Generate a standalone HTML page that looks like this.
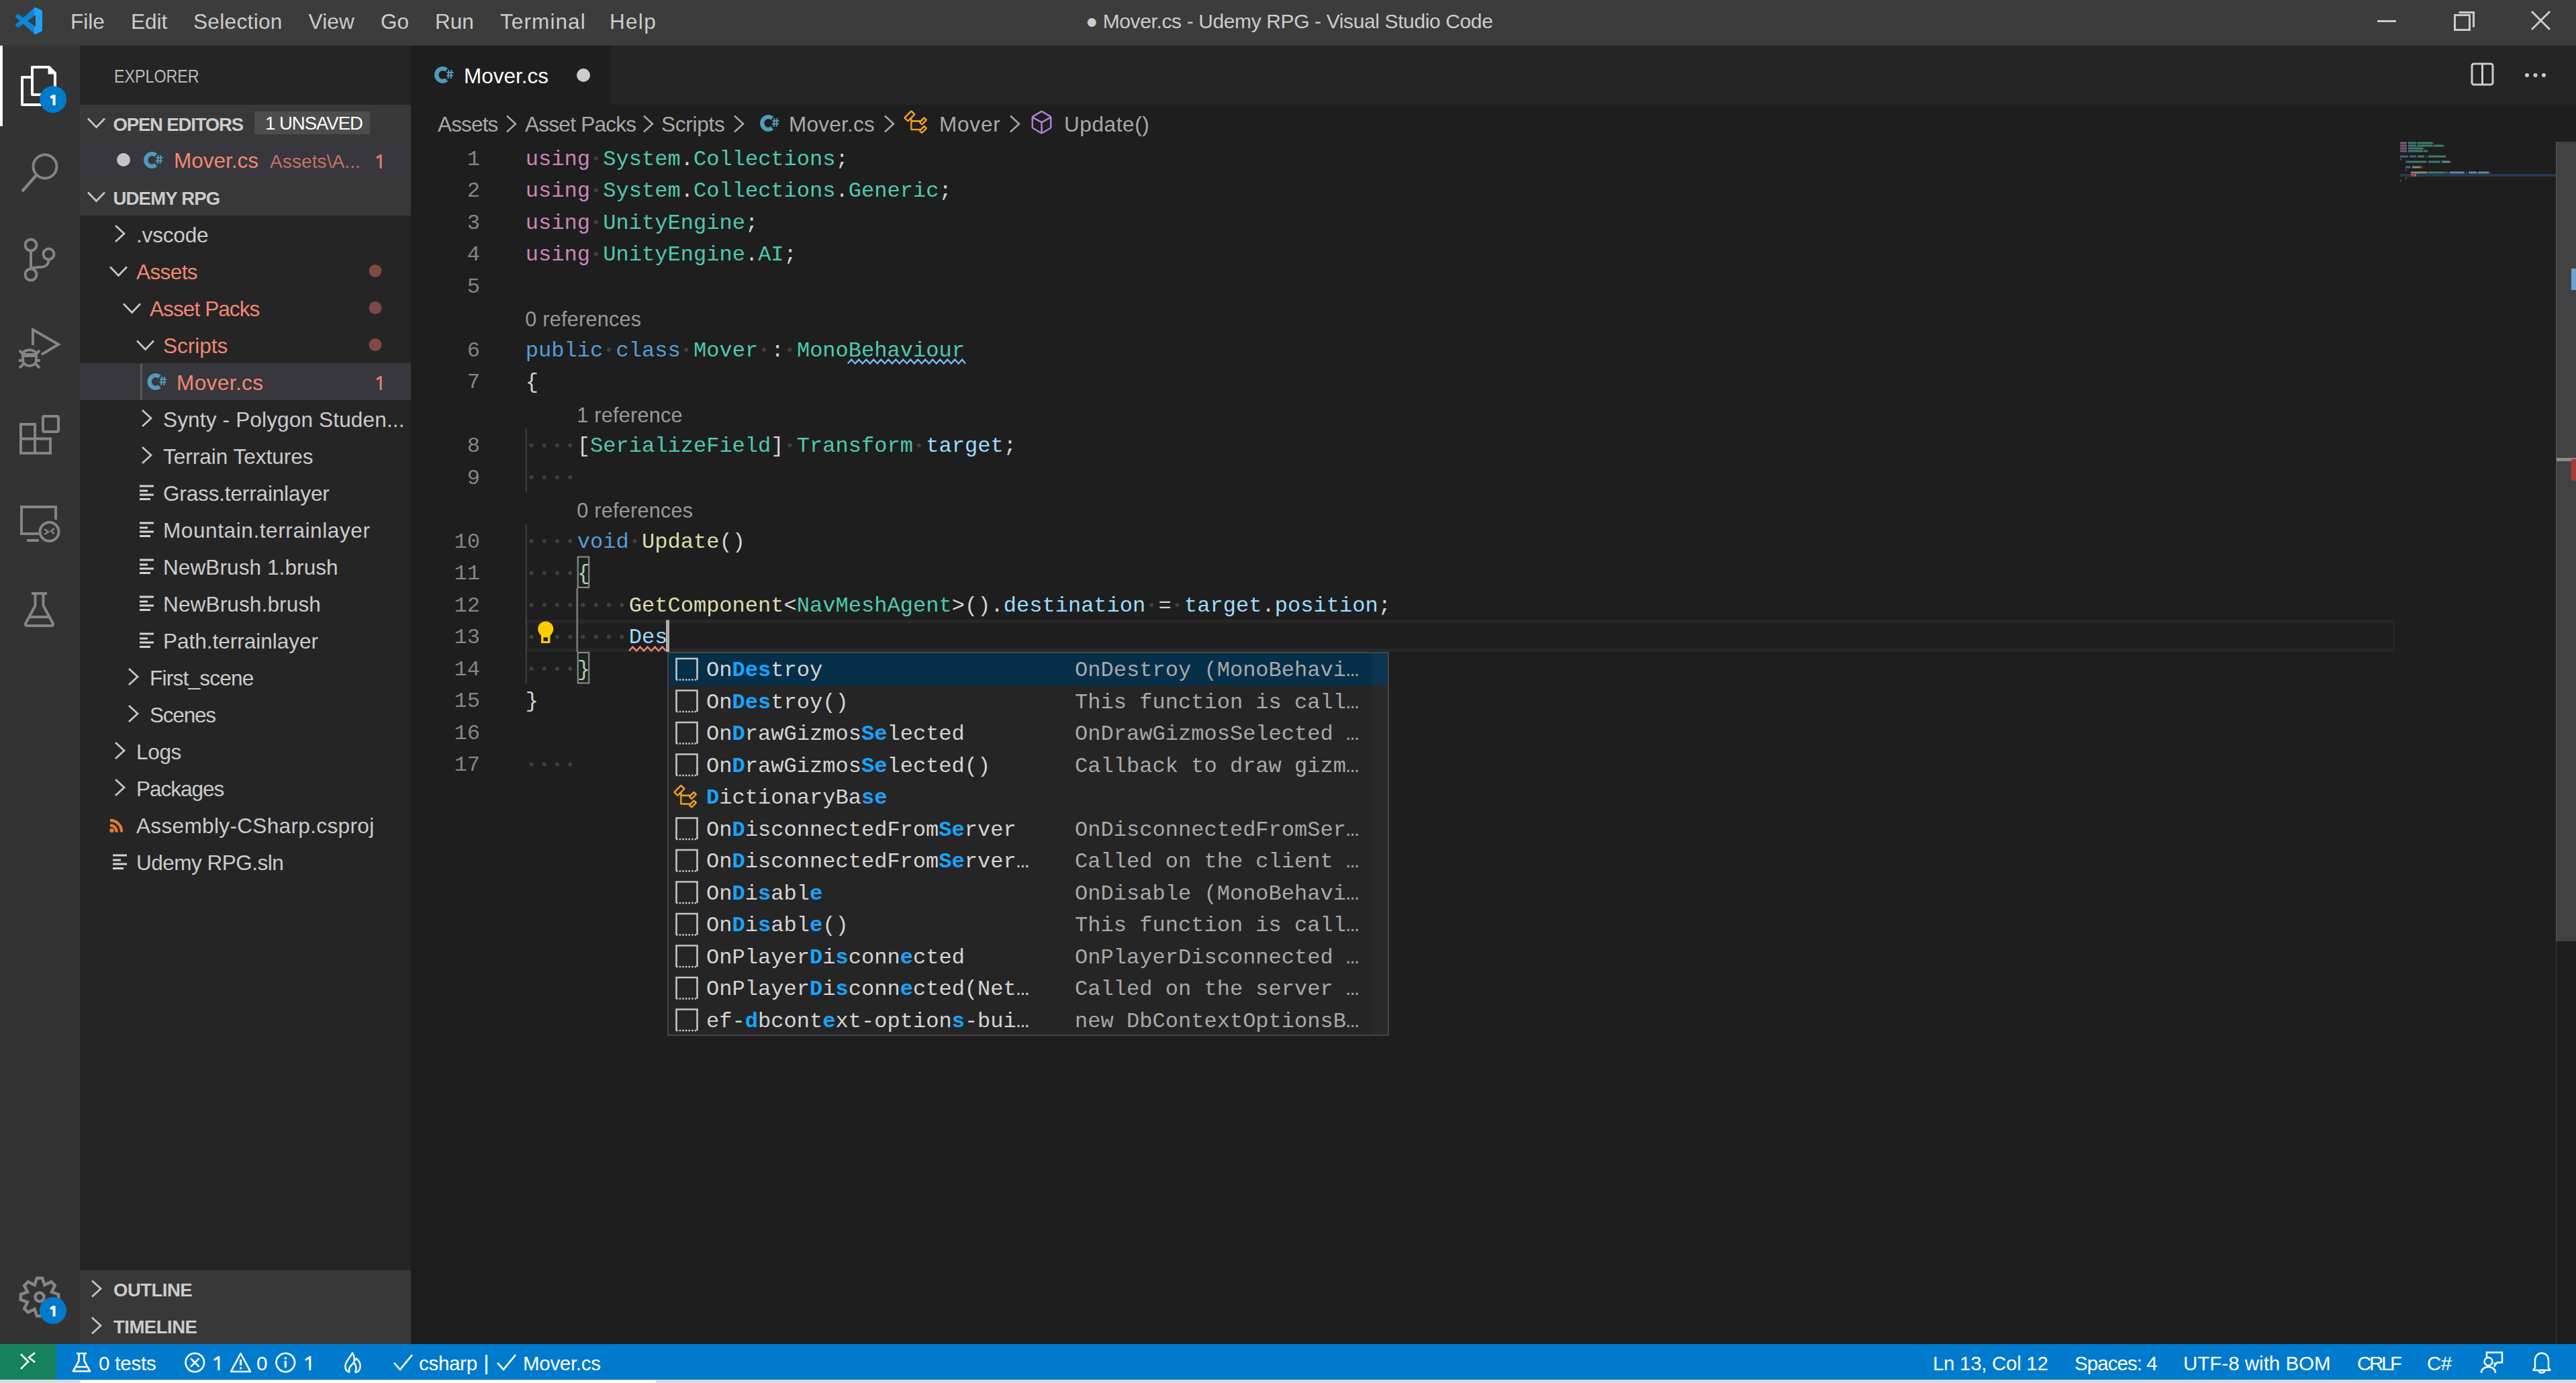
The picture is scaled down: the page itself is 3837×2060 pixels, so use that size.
<!DOCTYPE html><html><head><meta charset="utf-8"><style>html,body{margin:0;padding:0;}body{width:3837px;height:2060px;position:relative;overflow:hidden;background:#1e1e1e;font-family:"Liberation Sans",sans-serif;}</style></head><body>
<div style="position:absolute;left:0px;top:0px;width:3837px;height:68px;background:#3c3c3c;"></div>
<div style="position:absolute;left:0px;top:68px;width:119px;height:1934px;background:#333333;"></div>
<div style="position:absolute;left:119px;top:68px;width:493px;height:1934px;background:#252526;"></div>
<div style="position:absolute;left:612px;top:68px;width:3225px;height:88px;background:#252526;"></div>
<div style="position:absolute;left:612px;top:68px;width:297px;height:88px;background:#1e1e1e;"></div>
<div style="position:absolute;left:0px;top:2002px;width:3837px;height:53px;background:#007acc;"></div>
<div style="position:absolute;left:0px;top:2002px;width:84px;height:53px;background:#16825d;"></div>
<div style="position:absolute;left:0px;top:2055px;width:3837px;height:5px;background:#d8dae3;"></div>
<div style="position:absolute;left:120px;top:2055px;width:857px;height:5px;background:#ffffff;border-top:1px solid #d9cfcf;box-sizing:border-box;"></div>
<svg style="position:absolute;left:23px;top:11px;" width="40" height="40" viewBox="0 0 100 100"><defs><clipPath id="lg"><path d="M96.46 10.8L75.86.87a6.23 6.23 0 0 0-7.1 1.2L29.35 38.04 12.17 25a4.16 4.16 0 0 0-5.32.24L1.35 30.25a4.17 4.17 0 0 0 0 6.16L16.25 50 1.35 63.59a4.17 4.17 0 0 0 0 6.16l5.5 5a4.16 4.16 0 0 0 5.32.24l17.18-13.04L68.76 97.9a6.23 6.23 0 0 0 7.1 1.2l20.6-9.92A6.25 6.25 0 0 0 100 83.56V16.44a6.25 6.25 0 0 0-3.54-5.64zM75 72.7 45.11 50 75 27.3z"/></clipPath></defs><g clip-path="url(#lg)"><rect x="0" y="0" width="100" height="100" fill="#0a78c8"/><path d="M0 30L30 38L75 0H100V100H75L30 62L0 70Z" fill="#0d86da"/><rect x="70" y="0" width="30" height="100" fill="#23a0f2"/></g></svg>
<div style="position:absolute;left:105px;top:17.34px;height:31.5px;line-height:31.5px;font-size:31.5px;font-family:'Liberation Sans', sans-serif;color:#cccccc;font-weight:normal;letter-spacing:0px;white-space:pre;">File</div>
<div style="position:absolute;left:195px;top:17.34px;height:31.5px;line-height:31.5px;font-size:31.5px;font-family:'Liberation Sans', sans-serif;color:#cccccc;font-weight:normal;letter-spacing:0px;white-space:pre;">Edit</div>
<div style="position:absolute;left:288px;top:17.34px;height:31.5px;line-height:31.5px;font-size:31.5px;font-family:'Liberation Sans', sans-serif;color:#cccccc;font-weight:normal;letter-spacing:0.35px;white-space:pre;">Selection</div>
<div style="position:absolute;left:459.5px;top:17.34px;height:31.5px;line-height:31.5px;font-size:31.5px;font-family:'Liberation Sans', sans-serif;color:#cccccc;font-weight:normal;letter-spacing:0.2px;white-space:pre;">View</div>
<div style="position:absolute;left:567px;top:17.34px;height:31.5px;line-height:31.5px;font-size:31.5px;font-family:'Liberation Sans', sans-serif;color:#cccccc;font-weight:normal;letter-spacing:0px;white-space:pre;">Go</div>
<div style="position:absolute;left:648px;top:17.34px;height:31.5px;line-height:31.5px;font-size:31.5px;font-family:'Liberation Sans', sans-serif;color:#cccccc;font-weight:normal;letter-spacing:0px;white-space:pre;">Run</div>
<div style="position:absolute;left:745px;top:17.34px;height:31.5px;line-height:31.5px;font-size:31.5px;font-family:'Liberation Sans', sans-serif;color:#cccccc;font-weight:normal;letter-spacing:1.1px;white-space:pre;">Terminal</div>
<div style="position:absolute;left:908px;top:17.34px;height:31.5px;line-height:31.5px;font-size:31.5px;font-family:'Liberation Sans', sans-serif;color:#cccccc;font-weight:normal;letter-spacing:1.3px;white-space:pre;">Help</div>
<div style="position:absolute;left:1617px;top:16.60px;height:30px;line-height:30px;font-size:30px;font-family:'Liberation Sans', sans-serif;color:#cccccc;font-weight:normal;letter-spacing:-0.38px;white-space:pre;">● Mover.cs - Udemy RPG - Visual Studio Code</div>
<div style="position:absolute;left:3541px;top:30px;width:28px;height:3px;background:#cccccc;"></div>
<svg style="position:absolute;left:3650px;top:12px;" width="40" height="40" viewBox="0 0 40 40"><rect x="6.5" y="10.5" width="22" height="22" fill="none" stroke="#cccccc" stroke-width="3"/><path d="M12.5 6.5H34.5V28.5" fill="none" stroke="#cccccc" stroke-width="3"/></svg>
<svg style="position:absolute;left:3764px;top:10px;" width="40" height="40" viewBox="0 0 40 40"><path d="M7 7L34 34M34 7L7 34" stroke="#cccccc" stroke-width="3"/></svg>
<div style="position:absolute;left:0px;top:68px;width:4px;height:120px;background:#ffffff;"></div>
<svg style="position:absolute;left:0;top:0" width="119" height="2002" viewBox="0 0 119 2002"><path d="M48 100H73L82 109V141H48Z" fill="none" stroke="#fff" stroke-width="4" stroke-linejoin="round"/><path d="M73 100V109H82" fill="#fff" stroke="#fff" stroke-width="3"/><path d="M47 115H33V156H64V142" fill="none" stroke="#fff" stroke-width="4" stroke-linejoin="round"/><circle cx="79" cy="148" r="20" fill="#007acc"/><circle cx="67" cy="248" r="17.5" fill="none" stroke="#858585" stroke-width="4"/><path d="M54.5 260.5L33 285" stroke="#858585" stroke-width="4.5"/><circle cx="46" cy="365" r="8.5" fill="none" stroke="#858585" stroke-width="4"/><circle cx="46" cy="409" r="8.5" fill="none" stroke="#858585" stroke-width="4"/><circle cx="72.5" cy="378.5" r="8" fill="none" stroke="#858585" stroke-width="4"/><path d="M46 373.5V400.5M72.5 386.5C72.5 396 66 398 58 398C51 398 46 399 46 402" fill="none" stroke="#858585" stroke-width="4"/><path d="M49 514V491L87 513L62 528" fill="none" stroke="#858585" stroke-width="4" stroke-linejoin="miter"/><path d="M34 528C34 519 54 519 54 528Z" fill="none" stroke="#858585" stroke-width="4"/><path d="M34 530H54V536C54 548 34 548 34 536Z" fill="none" stroke="#858585" stroke-width="4"/><path d="M29 522L35 528M59 522L53 528M28 537H34M54 537H60M29 548L35 542M59 548L53 542" stroke="#858585" stroke-width="4"/><path d="M31 632H52V675H31ZM31 653.5H75V675H52" fill="none" stroke="#858585" stroke-width="4"/><rect x="64" y="620" width="23" height="23" rx="2" fill="none" stroke="#858585" stroke-width="4"/><path d="M63 795H32V755H83V774" fill="none" stroke="#858585" stroke-width="4"/><path d="M40 805H58" stroke="#858585" stroke-width="4"/><circle cx="73.5" cy="792" r="14" fill="#333" stroke="#858585" stroke-width="4"/><path d="M66 796L72 792L66 788M81 787L76 791L81 795" fill="none" stroke="#858585" stroke-width="2.5"/><path d="M47 884H70M52.5 884V902L38 929Q37 932 40 932H77Q80 932 79 929L64.5 902V884M44 919H73" fill="none" stroke="#858585" stroke-width="4" stroke-linejoin="round"/><polygon points="55.0,1903.8 63.0,1903.8 66.5,1914.0 76.2,1909.2 81.8,1914.8 77.0,1924.5 87.2,1928.0 87.2,1936.0 77.0,1939.5 81.8,1949.2 76.2,1954.8 66.5,1950.0 63.0,1960.2 55.0,1960.2 51.5,1950.0 41.8,1954.8 36.2,1949.2 41.0,1939.5 30.8,1936.0 30.8,1928.0 41.0,1924.5 36.2,1914.8 41.8,1909.2 51.5,1914.0" fill="none" stroke="#858585" stroke-width="4.5" stroke-linejoin="miter"/><circle cx="59" cy="1932" r="6.5" fill="none" stroke="#858585" stroke-width="4.5"/><circle cx="79" cy="1952" r="20" fill="#007acc"/><path d="M80.6 141.2V156.8M75.2 145.6L80.6 142.2" fill="none" stroke="#fff" stroke-width="4"/><path d="M80.6 1945.2V1960.8M75.2 1949.6L80.6 1946.2" fill="none" stroke="#fff" stroke-width="4"/></svg>
<div style="position:absolute;left:170px;top:98.87px;height:28.5px;line-height:28.5px;font-size:28.5px;font-family:'Liberation Sans', sans-serif;color:#bbbbbb;font-weight:normal;letter-spacing:0px;white-space:pre;transform:scaleX(0.815);transform-origin:0 0;">EXPLORER</div>
<div style="position:absolute;left:119px;top:156px;width:493px;height:55px;background:#383838;"></div>
<div style="position:absolute;left:119px;top:211px;width:493px;height:55px;background:#37373d;"></div>
<div style="position:absolute;left:119px;top:266px;width:493px;height:55px;background:#383838;"></div>
<div style="position:absolute;left:119px;top:1892px;width:493px;height:110px;background:#383838;"></div>
<div style="position:absolute;left:168.5px;top:171.72px;height:27.5px;line-height:27.5px;font-size:27.5px;font-family:'Liberation Sans', sans-serif;color:#cccccc;font-weight:bold;letter-spacing:-1.15px;white-space:pre;">OPEN EDITORS</div>
<div style="position:absolute;left:379px;top:166px;width:172px;height:33.5px;background:#4d4d4d;"></div>
<div style="position:absolute;left:395px;top:169.72px;height:27.5px;line-height:27.5px;font-size:27.5px;font-family:'Liberation Sans', sans-serif;color:#ffffff;font-weight:normal;letter-spacing:-1.0px;white-space:pre;">1 UNSAVED</div>
<div style="position:absolute;left:259px;top:224.34px;height:31.5px;line-height:31.5px;font-size:31.5px;font-family:'Liberation Sans', sans-serif;color:#f48771;font-weight:normal;letter-spacing:0px;white-space:pre;">Mover.cs</div>
<div style="position:absolute;left:402px;top:227.30px;height:28px;line-height:28px;font-size:28px;font-family:'Liberation Sans', sans-serif;color:rgba(244,135,113,0.75);font-weight:normal;letter-spacing:0.1px;white-space:pre;">Assets\A...</div>
<div style="position:absolute;left:168.5px;top:281.72px;height:27.5px;line-height:27.5px;font-size:27.5px;font-family:'Liberation Sans', sans-serif;color:#cccccc;font-weight:bold;letter-spacing:-0.8px;white-space:pre;">UDEMY RPG</div>
<div style="position:absolute;left:203px;top:335.34px;height:31.5px;line-height:31.5px;font-size:31.5px;font-family:'Liberation Sans', sans-serif;color:#cccccc;font-weight:normal;letter-spacing:-0.17px;white-space:pre;">.vscode</div>
<div style="position:absolute;left:203px;top:390.34px;height:31.5px;line-height:31.5px;font-size:31.5px;font-family:'Liberation Sans', sans-serif;color:#f48771;font-weight:normal;letter-spacing:-0.6px;white-space:pre;">Assets</div>
<div style="position:absolute;left:223px;top:445.34px;height:31.5px;line-height:31.5px;font-size:31.5px;font-family:'Liberation Sans', sans-serif;color:#f48771;font-weight:normal;letter-spacing:-0.9px;white-space:pre;">Asset Packs</div>
<div style="position:absolute;left:243px;top:500.34px;height:31.5px;line-height:31.5px;font-size:31.5px;font-family:'Liberation Sans', sans-serif;color:#f48771;font-weight:normal;letter-spacing:0px;white-space:pre;">Scripts</div>
<div style="position:absolute;left:119px;top:541px;width:493px;height:55px;background:#37373d;"></div>
<div style="position:absolute;left:209px;top:541px;width:3px;height:55px;background:#585858;"></div>
<div style="position:absolute;left:263px;top:555.34px;height:31.5px;line-height:31.5px;font-size:31.5px;font-family:'Liberation Sans', sans-serif;color:#f48771;font-weight:normal;letter-spacing:0.43px;white-space:pre;">Mover.cs</div>
<div style="position:absolute;left:243px;top:610.34px;height:31.5px;line-height:31.5px;font-size:31.5px;font-family:'Liberation Sans', sans-serif;color:#cccccc;font-weight:normal;letter-spacing:0.17px;white-space:pre;">Synty - Polygon Studen...</div>
<div style="position:absolute;left:243px;top:665.34px;height:31.5px;line-height:31.5px;font-size:31.5px;font-family:'Liberation Sans', sans-serif;color:#cccccc;font-weight:normal;letter-spacing:0px;white-space:pre;">Terrain Textures</div>
<div style="position:absolute;left:243px;top:720.34px;height:31.5px;line-height:31.5px;font-size:31.5px;font-family:'Liberation Sans', sans-serif;color:#cccccc;font-weight:normal;letter-spacing:-0.15px;white-space:pre;">Grass.terrainlayer</div>
<div style="position:absolute;left:243px;top:775.34px;height:31.5px;line-height:31.5px;font-size:31.5px;font-family:'Liberation Sans', sans-serif;color:#cccccc;font-weight:normal;letter-spacing:0.6px;white-space:pre;">Mountain.terrainlayer</div>
<div style="position:absolute;left:243px;top:830.34px;height:31.5px;line-height:31.5px;font-size:31.5px;font-family:'Liberation Sans', sans-serif;color:#cccccc;font-weight:normal;letter-spacing:0.1px;white-space:pre;">NewBrush 1.brush</div>
<div style="position:absolute;left:243px;top:885.34px;height:31.5px;line-height:31.5px;font-size:31.5px;font-family:'Liberation Sans', sans-serif;color:#cccccc;font-weight:normal;letter-spacing:0.15px;white-space:pre;">NewBrush.brush</div>
<div style="position:absolute;left:243px;top:940.34px;height:31.5px;line-height:31.5px;font-size:31.5px;font-family:'Liberation Sans', sans-serif;color:#cccccc;font-weight:normal;letter-spacing:0px;white-space:pre;">Path.terrainlayer</div>
<div style="position:absolute;left:223px;top:995.34px;height:31.5px;line-height:31.5px;font-size:31.5px;font-family:'Liberation Sans', sans-serif;color:#cccccc;font-weight:normal;letter-spacing:-0.75px;white-space:pre;">First_scene</div>
<div style="position:absolute;left:223px;top:1050.34px;height:31.5px;line-height:31.5px;font-size:31.5px;font-family:'Liberation Sans', sans-serif;color:#cccccc;font-weight:normal;letter-spacing:-1.2px;white-space:pre;">Scenes</div>
<div style="position:absolute;left:203px;top:1105.34px;height:31.5px;line-height:31.5px;font-size:31.5px;font-family:'Liberation Sans', sans-serif;color:#cccccc;font-weight:normal;letter-spacing:-0.33px;white-space:pre;">Logs</div>
<div style="position:absolute;left:203px;top:1160.34px;height:31.5px;line-height:31.5px;font-size:31.5px;font-family:'Liberation Sans', sans-serif;color:#cccccc;font-weight:normal;letter-spacing:-1.0px;white-space:pre;">Packages</div>
<div style="position:absolute;left:203px;top:1215.34px;height:31.5px;line-height:31.5px;font-size:31.5px;font-family:'Liberation Sans', sans-serif;color:#cccccc;font-weight:normal;letter-spacing:0.36px;white-space:pre;">Assembly-CSharp.csproj</div>
<div style="position:absolute;left:203px;top:1270.34px;height:31.5px;line-height:31.5px;font-size:31.5px;font-family:'Liberation Sans', sans-serif;color:#cccccc;font-weight:normal;letter-spacing:-0.5px;white-space:pre;">Udemy RPG.sln</div>
<div style="position:absolute;left:169px;top:1907.72px;height:27.5px;line-height:27.5px;font-size:27.5px;font-family:'Liberation Sans', sans-serif;color:#cccccc;font-weight:bold;letter-spacing:-0.5px;white-space:pre;">OUTLINE</div>
<div style="position:absolute;left:169px;top:1962.72px;height:27.5px;line-height:27.5px;font-size:27.5px;font-family:'Liberation Sans', sans-serif;color:#cccccc;font-weight:bold;letter-spacing:-0.5px;white-space:pre;">TIMELINE</div>
<svg style="position:absolute;left:0;top:0" width="612" height="2002" viewBox="0 0 612 2002"><path d="M131 176.5L143.5 189.5L156 176.5" fill="none" stroke="#c5c5c5" stroke-width="2.8"/><circle cx="184" cy="238" r="10" fill="#c5c5c5"/><path d="M232.23 231.17A9.3 9.3 0 1 0 232.23 245.83" fill="none" stroke="#519aba" stroke-width="6.3"/><path d="M235.5 231L234.5 244M239.5 231L238.5 244M232.5 235H242.5M232 239.5H242" stroke="#519aba" stroke-width="2"/><path d="M567.2 230V251M561 235.3L567.2 231.2" fill="none" stroke="rgba(244,135,113,0.85)" stroke-width="3.3"/><path d="M131 286.5L143.5 299.5L156 286.5" fill="none" stroke="#c5c5c5" stroke-width="2.8"/><path d="M172 336L185 348L172 360" fill="none" stroke="#c5c5c5" stroke-width="2.8"/><path d="M164 397.5L176.5 410.5L189 397.5" fill="none" stroke="#c5c5c5" stroke-width="2.8"/><circle cx="559" cy="403.5" r="9.5" fill="#7e4944"/><path d="M184 452.5L196.5 465.5L209 452.5" fill="none" stroke="#c5c5c5" stroke-width="2.8"/><circle cx="559" cy="458.5" r="9.5" fill="#7e4944"/><path d="M204 507.5L216.5 520.5L229 507.5" fill="none" stroke="#c5c5c5" stroke-width="2.8"/><circle cx="559" cy="513.5" r="9.5" fill="#7e4944"/><path d="M237.73 561.17A9.3 9.3 0 1 0 237.73 575.83" fill="none" stroke="#519aba" stroke-width="6.3"/><path d="M241.0 561L240.0 574M245.0 561L244.0 574M238.0 565H248.0M237.5 569.5H247.5" stroke="#519aba" stroke-width="2"/><path d="M567.2 560V581M561 565.3L567.2 561.2" fill="none" stroke="rgba(244,135,113,0.85)" stroke-width="3.3"/><path d="M212 611L225 623L212 635" fill="none" stroke="#c5c5c5" stroke-width="2.8"/><path d="M212 666L225 678L212 690" fill="none" stroke="#c5c5c5" stroke-width="2.8"/><path d="M208 724.0H229M208 731.0H220M208 737.0H229M208 743.5H224" stroke="#d4d4d4" stroke-width="3"/><path d="M208 779.0H229M208 786.0H220M208 792.0H229M208 798.5H224" stroke="#d4d4d4" stroke-width="3"/><path d="M208 834.0H229M208 841.0H220M208 847.0H229M208 853.5H224" stroke="#d4d4d4" stroke-width="3"/><path d="M208 889.0H229M208 896.0H220M208 902.0H229M208 908.5H224" stroke="#d4d4d4" stroke-width="3"/><path d="M208 944.0H229M208 951.0H220M208 957.0H229M208 963.5H224" stroke="#d4d4d4" stroke-width="3"/><path d="M192 996L205 1008L192 1020" fill="none" stroke="#c5c5c5" stroke-width="2.8"/><path d="M192 1051L205 1063L192 1075" fill="none" stroke="#c5c5c5" stroke-width="2.8"/><path d="M172 1106L185 1118L172 1130" fill="none" stroke="#c5c5c5" stroke-width="2.8"/><path d="M172 1161L185 1173L172 1185" fill="none" stroke="#c5c5c5" stroke-width="2.8"/><circle cx="166.5" cy="1237" r="3.2" fill="#e37933"/><path d="M164 1229.5A9 9 0 0 1 173.5 1239.5M164 1222A16.5 16.5 0 0 1 181 1239.5" fill="none" stroke="#e37933" stroke-width="4.3"/><path d="M168 1274.0H189M168 1281.0H180M168 1287.0H189M168 1293.5H184" stroke="#d4d4d4" stroke-width="3"/><path d="M137 1907.5L150 1919.5L137 1931.5" fill="none" stroke="#c5c5c5" stroke-width="2.8"/><path d="M137 1962.5L150 1974.5L137 1986.5" fill="none" stroke="#c5c5c5" stroke-width="2.8"/></svg>
<div style="position:absolute;left:691px;top:98.34px;height:31.5px;line-height:31.5px;font-size:31.5px;font-family:'Liberation Sans', sans-serif;color:#ffffff;font-weight:normal;letter-spacing:0px;white-space:pre;">Mover.cs</div>
<div style="position:absolute;left:652px;top:170.34px;height:31.5px;line-height:31.5px;font-size:31.5px;font-family:'Liberation Sans', sans-serif;color:#a9a9a9;font-weight:normal;letter-spacing:-0.85px;white-space:pre;">Assets</div>
<div style="position:absolute;left:782px;top:170.34px;height:31.5px;line-height:31.5px;font-size:31.5px;font-family:'Liberation Sans', sans-serif;color:#a9a9a9;font-weight:normal;letter-spacing:-0.72px;white-space:pre;">Asset Packs</div>
<div style="position:absolute;left:985px;top:170.34px;height:31.5px;line-height:31.5px;font-size:31.5px;font-family:'Liberation Sans', sans-serif;color:#a9a9a9;font-weight:normal;letter-spacing:-0.25px;white-space:pre;">Scripts</div>
<div style="position:absolute;left:1175px;top:170.34px;height:31.5px;line-height:31.5px;font-size:31.5px;font-family:'Liberation Sans', sans-serif;color:#a9a9a9;font-weight:normal;letter-spacing:0.25px;white-space:pre;">Mover.cs</div>
<div style="position:absolute;left:1399px;top:170.34px;height:31.5px;line-height:31.5px;font-size:31.5px;font-family:'Liberation Sans', sans-serif;color:#a9a9a9;font-weight:normal;letter-spacing:0.8px;white-space:pre;">Mover</div>
<div style="position:absolute;left:1585px;top:170.34px;height:31.5px;line-height:31.5px;font-size:31.5px;font-family:'Liberation Sans', sans-serif;color:#a9a9a9;font-weight:normal;letter-spacing:0.6px;white-space:pre;">Update()</div>
<svg style="position:absolute;left:0;top:0" width="3837" height="220" viewBox="0 0 3837 220"><path d="M665.23 104.17A9.3 9.3 0 1 0 665.23 118.83" fill="none" stroke="#519aba" stroke-width="6.3"/><path d="M668.5 104L667.5 117M672.5 104L671.5 117M665.5 108H675.5M665 112.5H675" stroke="#519aba" stroke-width="2"/><circle cx="869" cy="112" r="10" fill="#cccccc"/><rect x="3682" y="95" width="31" height="31" rx="3" fill="none" stroke="#cccccc" stroke-width="3"/><path d="M3697.5 95V126" stroke="#cccccc" stroke-width="3"/><circle cx="3764" cy="112" r="3" fill="#cccccc"/><circle cx="3776.5" cy="112" r="3" fill="#cccccc"/><circle cx="3789" cy="112" r="3" fill="#cccccc"/><path d="M755 172.5L768 184.5L755 196.5" fill="none" stroke="#a9a9a9" stroke-width="2.5"/><path d="M959 172.5L972 184.5L959 196.5" fill="none" stroke="#a9a9a9" stroke-width="2.5"/><path d="M1094 172.5L1107 184.5L1094 196.5" fill="none" stroke="#a9a9a9" stroke-width="2.5"/><path d="M1150.23 176.17A9.3 9.3 0 1 0 1150.23 190.83" fill="none" stroke="#519aba" stroke-width="6.3"/><path d="M1153.5 176L1152.5 189M1157.5 176L1156.5 189M1150.5 180H1160.5M1150 184.5H1160" stroke="#519aba" stroke-width="2"/><path d="M1318 172.5L1331 184.5L1318 196.5" fill="none" stroke="#a9a9a9" stroke-width="2.5"/><g transform="translate(1344,162) scale(2.5)"><path fill="#ee9d28" d="M11.34 9.71h.71l2.67-2.67v-.71L13.38 5h-.7l-1.82 1.81h-5V5.56l1.86-1.85V3l-2-2H5L1 5v.71l2 2h.71l1.14-1.15v5.79l.5.5H10v.52l1.33 1.34h.71l2.67-2.67v-.71L13.37 10h-.7l-1.86 1.85h-5v-4H10v.48l1.34 1.38zm1.69-3.65l.63.63-2 2-.63-.63 2-2zm0 5l.63.63-2 2-.63-.63 2-2zM3.35 6.65l-1.29-1.3 3.29-3.29 1.3 1.29-3.3 3.3z"/></g><path d="M1505 172.5L1518 184.5L1505 196.5" fill="none" stroke="#a9a9a9" stroke-width="2.5"/><g transform="translate(1531.5,162.5) scale(2.5)"><path fill="#b180d7" d="M13.51 4l-5-3h-1l-5 3-.49.86v6l.49.85 5 3h1l5-3 .49-.85v-6L13.51 4zm-6 9.56l-4.5-2.7V5.7l4.5 2.45v5.41zM3.27 4.7l4.74-2.84 4.74 2.84-4.74 2.59L3.27 4.7zm9.74 6.16l-4.5 2.7V8.15l4.5-2.45v5.16z"/></g></svg>
<div style="position:absolute;left:556px;width:159px;text-align:right;top:213.80px;height:47.5px;line-height:47.5px;font-family:'Liberation Mono', monospace;font-size:32.07px;color:#858585;white-space:pre">1</div>
<div style="position:absolute;left:782.75px;top:213.80px;height:47.5px;line-height:47.5px;font-family:'Liberation Mono', monospace;font-size:32.07px;white-space:pre;color:#d4d4d4"><span style="color:#c586c0">using</span> <span style="color:#4ec9b0">System</span><span style="color:#d4d4d4">.</span><span style="color:#4ec9b0">Collections</span><span style="color:#d4d4d4">;</span></div>
<div style="position:absolute;left:556px;width:159px;text-align:right;top:261.30px;height:47.5px;line-height:47.5px;font-family:'Liberation Mono', monospace;font-size:32.07px;color:#858585;white-space:pre">2</div>
<div style="position:absolute;left:782.75px;top:261.30px;height:47.5px;line-height:47.5px;font-family:'Liberation Mono', monospace;font-size:32.07px;white-space:pre;color:#d4d4d4"><span style="color:#c586c0">using</span> <span style="color:#4ec9b0">System</span><span style="color:#d4d4d4">.</span><span style="color:#4ec9b0">Collections</span><span style="color:#d4d4d4">.</span><span style="color:#4ec9b0">Generic</span><span style="color:#d4d4d4">;</span></div>
<div style="position:absolute;left:556px;width:159px;text-align:right;top:308.80px;height:47.5px;line-height:47.5px;font-family:'Liberation Mono', monospace;font-size:32.07px;color:#858585;white-space:pre">3</div>
<div style="position:absolute;left:782.75px;top:308.80px;height:47.5px;line-height:47.5px;font-family:'Liberation Mono', monospace;font-size:32.07px;white-space:pre;color:#d4d4d4"><span style="color:#c586c0">using</span> <span style="color:#4ec9b0">UnityEngine</span><span style="color:#d4d4d4">;</span></div>
<div style="position:absolute;left:556px;width:159px;text-align:right;top:356.30px;height:47.5px;line-height:47.5px;font-family:'Liberation Mono', monospace;font-size:32.07px;color:#858585;white-space:pre">4</div>
<div style="position:absolute;left:782.75px;top:356.30px;height:47.5px;line-height:47.5px;font-family:'Liberation Mono', monospace;font-size:32.07px;white-space:pre;color:#d4d4d4"><span style="color:#c586c0">using</span> <span style="color:#4ec9b0">UnityEngine</span><span style="color:#d4d4d4">.</span><span style="color:#4ec9b0">AI</span><span style="color:#d4d4d4">;</span></div>
<div style="position:absolute;left:556px;width:159px;text-align:right;top:403.80px;height:47.5px;line-height:47.5px;font-family:'Liberation Mono', monospace;font-size:32.07px;color:#858585;white-space:pre">5</div>
<div style="position:absolute;left:782.25px;top:460.18px;height:30.5px;line-height:30.5px;font-size:30.5px;font-family:'Liberation Sans', sans-serif;color:#999999;font-weight:normal;letter-spacing:0.3px;white-space:pre;">0 references</div>
<div style="position:absolute;left:556px;width:159px;text-align:right;top:498.80px;height:47.5px;line-height:47.5px;font-family:'Liberation Mono', monospace;font-size:32.07px;color:#858585;white-space:pre">6</div>
<div style="position:absolute;left:782.75px;top:498.80px;height:47.5px;line-height:47.5px;font-family:'Liberation Mono', monospace;font-size:32.07px;white-space:pre;color:#d4d4d4"><span style="color:#569cd6">public</span> <span style="color:#569cd6">class</span> <span style="color:#4ec9b0">Mover</span> <span style="color:#d4d4d4">:</span> <span style="color:#4ec9b0">MonoBehaviour</span></div>
<div style="position:absolute;left:556px;width:159px;text-align:right;top:546.30px;height:47.5px;line-height:47.5px;font-family:'Liberation Mono', monospace;font-size:32.07px;color:#858585;white-space:pre">7</div>
<div style="position:absolute;left:782.75px;top:546.30px;height:47.5px;line-height:47.5px;font-family:'Liberation Mono', monospace;font-size:32.07px;white-space:pre;color:#d4d4d4"><span style="color:#d4d4d4">{</span></div>
<div style="position:absolute;left:859.21px;top:602.68px;height:30.5px;line-height:30.5px;font-size:30.5px;font-family:'Liberation Sans', sans-serif;color:#999999;font-weight:normal;letter-spacing:0.3px;white-space:pre;">1 reference</div>
<div style="position:absolute;left:556px;width:159px;text-align:right;top:641.30px;height:47.5px;line-height:47.5px;font-family:'Liberation Mono', monospace;font-size:32.07px;color:#858585;white-space:pre">8</div>
<div style="position:absolute;left:782.75px;top:641.30px;height:47.5px;line-height:47.5px;font-family:'Liberation Mono', monospace;font-size:32.07px;white-space:pre;color:#d4d4d4">    <span style="color:#d4d4d4">[</span><span style="color:#4ec9b0">SerializeField</span><span style="color:#d4d4d4">]</span> <span style="color:#4ec9b0">Transform</span> <span style="color:#9cdcfe">target</span><span style="color:#d4d4d4">;</span></div>
<div style="position:absolute;left:556px;width:159px;text-align:right;top:688.80px;height:47.5px;line-height:47.5px;font-family:'Liberation Mono', monospace;font-size:32.07px;color:#858585;white-space:pre">9</div>
<div style="position:absolute;left:782.75px;top:688.80px;height:47.5px;line-height:47.5px;font-family:'Liberation Mono', monospace;font-size:32.07px;white-space:pre;color:#d4d4d4">    </div>
<div style="position:absolute;left:859.21px;top:745.18px;height:30.5px;line-height:30.5px;font-size:30.5px;font-family:'Liberation Sans', sans-serif;color:#999999;font-weight:normal;letter-spacing:0.3px;white-space:pre;">0 references</div>
<div style="position:absolute;left:556px;width:159px;text-align:right;top:783.80px;height:47.5px;line-height:47.5px;font-family:'Liberation Mono', monospace;font-size:32.07px;color:#858585;white-space:pre">10</div>
<div style="position:absolute;left:782.75px;top:783.80px;height:47.5px;line-height:47.5px;font-family:'Liberation Mono', monospace;font-size:32.07px;white-space:pre;color:#d4d4d4">    <span style="color:#569cd6">void</span> <span style="color:#dcdcaa">Update</span><span style="color:#d4d4d4">()</span></div>
<div style="position:absolute;left:556px;width:159px;text-align:right;top:831.30px;height:47.5px;line-height:47.5px;font-family:'Liberation Mono', monospace;font-size:32.07px;color:#858585;white-space:pre">11</div>
<div style="position:absolute;left:782.75px;top:831.30px;height:47.5px;line-height:47.5px;font-family:'Liberation Mono', monospace;font-size:32.07px;white-space:pre;color:#d4d4d4">    <span style="color:#d4d4d4">{</span></div>
<div style="position:absolute;left:556px;width:159px;text-align:right;top:878.80px;height:47.5px;line-height:47.5px;font-family:'Liberation Mono', monospace;font-size:32.07px;color:#858585;white-space:pre">12</div>
<div style="position:absolute;left:782.75px;top:878.80px;height:47.5px;line-height:47.5px;font-family:'Liberation Mono', monospace;font-size:32.07px;white-space:pre;color:#d4d4d4">        <span style="color:#dcdcaa">GetComponent</span><span style="color:#d4d4d4">&lt;</span><span style="color:#4ec9b0">NavMeshAgent</span><span style="color:#d4d4d4">&gt;().</span><span style="color:#9cdcfe">destination</span> <span style="color:#d4d4d4">=</span> <span style="color:#9cdcfe">target</span><span style="color:#d4d4d4">.</span><span style="color:#9cdcfe">position</span><span style="color:#d4d4d4">;</span></div>
<div style="position:absolute;left:556px;width:159px;text-align:right;top:926.30px;height:47.5px;line-height:47.5px;font-family:'Liberation Mono', monospace;font-size:32.07px;color:#858585;white-space:pre">13</div>
<div style="position:absolute;left:782.75px;top:926.30px;height:47.5px;line-height:47.5px;font-family:'Liberation Mono', monospace;font-size:32.07px;white-space:pre;color:#d4d4d4">        <span style="color:#9cdcfe">Des</span></div>
<div style="position:absolute;left:556px;width:159px;text-align:right;top:973.80px;height:47.5px;line-height:47.5px;font-family:'Liberation Mono', monospace;font-size:32.07px;color:#858585;white-space:pre">14</div>
<div style="position:absolute;left:782.75px;top:973.80px;height:47.5px;line-height:47.5px;font-family:'Liberation Mono', monospace;font-size:32.07px;white-space:pre;color:#d4d4d4">    <span style="color:#d4d4d4">}</span></div>
<div style="position:absolute;left:556px;width:159px;text-align:right;top:1021.30px;height:47.5px;line-height:47.5px;font-family:'Liberation Mono', monospace;font-size:32.07px;color:#858585;white-space:pre">15</div>
<div style="position:absolute;left:782.75px;top:1021.30px;height:47.5px;line-height:47.5px;font-family:'Liberation Mono', monospace;font-size:32.07px;white-space:pre;color:#d4d4d4"><span style="color:#d4d4d4">}</span></div>
<div style="position:absolute;left:556px;width:159px;text-align:right;top:1068.80px;height:47.5px;line-height:47.5px;font-family:'Liberation Mono', monospace;font-size:32.07px;color:#858585;white-space:pre">16</div>
<div style="position:absolute;left:556px;width:159px;text-align:right;top:1116.30px;height:47.5px;line-height:47.5px;font-family:'Liberation Mono', monospace;font-size:32.07px;color:#858585;white-space:pre">17</div>
<div style="position:absolute;left:782.75px;top:1116.30px;height:47.5px;line-height:47.5px;font-family:'Liberation Mono', monospace;font-size:32.07px;white-space:pre;color:#d4d4d4">    </div>
<div style="position:absolute;left:784.5px;top:923.0px;width:2782.5px;height:5px;background:#282828;"></div>
<div style="position:absolute;left:784.5px;top:966.0px;width:2782.5px;height:5px;background:#282828;"></div>
<div style="position:absolute;left:784.5px;top:923.0px;width:2.5px;height:48px;background:#282828;"></div>
<div style="position:absolute;left:3564.5px;top:923.0px;width:2.5px;height:48px;background:#282828;"></div>
<svg style="position:absolute;left:0;top:0" width="3837" height="2002" viewBox="0 0 3837 2002"><circle cx="887.75" cy="236.00" r="3" fill="#3f3f3f"/><circle cx="887.75" cy="283.50" r="3" fill="#3f3f3f"/><circle cx="887.75" cy="331.00" r="3" fill="#3f3f3f"/><circle cx="887.75" cy="378.50" r="3" fill="#3f3f3f"/><circle cx="906.99" cy="521.00" r="3" fill="#3f3f3f"/><circle cx="1022.43" cy="521.00" r="3" fill="#3f3f3f"/><circle cx="1137.87" cy="521.00" r="3" fill="#3f3f3f"/><circle cx="1176.35" cy="521.00" r="3" fill="#3f3f3f"/><circle cx="791.55" cy="663.50" r="3" fill="#3f3f3f"/><circle cx="810.79" cy="663.50" r="3" fill="#3f3f3f"/><circle cx="830.03" cy="663.50" r="3" fill="#3f3f3f"/><circle cx="849.27" cy="663.50" r="3" fill="#3f3f3f"/><circle cx="1176.35" cy="663.50" r="3" fill="#3f3f3f"/><circle cx="1368.75" cy="663.50" r="3" fill="#3f3f3f"/><circle cx="791.55" cy="711.00" r="3" fill="#3f3f3f"/><circle cx="810.79" cy="711.00" r="3" fill="#3f3f3f"/><circle cx="830.03" cy="711.00" r="3" fill="#3f3f3f"/><circle cx="849.27" cy="711.00" r="3" fill="#3f3f3f"/><circle cx="791.55" cy="806.00" r="3" fill="#3f3f3f"/><circle cx="810.79" cy="806.00" r="3" fill="#3f3f3f"/><circle cx="830.03" cy="806.00" r="3" fill="#3f3f3f"/><circle cx="849.27" cy="806.00" r="3" fill="#3f3f3f"/><circle cx="945.47" cy="806.00" r="3" fill="#3f3f3f"/><circle cx="791.55" cy="853.50" r="3" fill="#3f3f3f"/><circle cx="810.79" cy="853.50" r="3" fill="#3f3f3f"/><circle cx="830.03" cy="853.50" r="3" fill="#3f3f3f"/><circle cx="849.27" cy="853.50" r="3" fill="#3f3f3f"/><circle cx="791.55" cy="901.00" r="3" fill="#3f3f3f"/><circle cx="810.79" cy="901.00" r="3" fill="#3f3f3f"/><circle cx="830.03" cy="901.00" r="3" fill="#3f3f3f"/><circle cx="849.27" cy="901.00" r="3" fill="#3f3f3f"/><circle cx="868.51" cy="901.00" r="3" fill="#3f3f3f"/><circle cx="887.75" cy="901.00" r="3" fill="#3f3f3f"/><circle cx="906.99" cy="901.00" r="3" fill="#3f3f3f"/><circle cx="926.23" cy="901.00" r="3" fill="#3f3f3f"/><circle cx="1715.07" cy="901.00" r="3" fill="#3f3f3f"/><circle cx="1753.55" cy="901.00" r="3" fill="#3f3f3f"/><circle cx="791.55" cy="948.50" r="3" fill="#3f3f3f"/><circle cx="810.79" cy="948.50" r="3" fill="#3f3f3f"/><circle cx="830.03" cy="948.50" r="3" fill="#3f3f3f"/><circle cx="849.27" cy="948.50" r="3" fill="#3f3f3f"/><circle cx="868.51" cy="948.50" r="3" fill="#3f3f3f"/><circle cx="887.75" cy="948.50" r="3" fill="#3f3f3f"/><circle cx="906.99" cy="948.50" r="3" fill="#3f3f3f"/><circle cx="926.23" cy="948.50" r="3" fill="#3f3f3f"/><circle cx="791.55" cy="996.00" r="3" fill="#3f3f3f"/><circle cx="810.79" cy="996.00" r="3" fill="#3f3f3f"/><circle cx="830.03" cy="996.00" r="3" fill="#3f3f3f"/><circle cx="849.27" cy="996.00" r="3" fill="#3f3f3f"/><circle cx="791.55" cy="1138.50" r="3" fill="#3f3f3f"/><circle cx="810.79" cy="1138.50" r="3" fill="#3f3f3f"/><circle cx="830.03" cy="1138.50" r="3" fill="#3f3f3f"/><circle cx="849.27" cy="1138.50" r="3" fill="#3f3f3f"/><rect x="782.75" y="638.5" width="2" height="95.0" fill="#404040"/><rect x="782.75" y="781.0" width="2" height="237.5" fill="#404040"/><rect x="858.21" y="876.0" width="3" height="95.0" fill="#707070"/><rect x="860.71" y="829.5" width="16.5" height="45.5" fill="rgba(0,100,0,0.12)" stroke="#888888" stroke-width="2.2"/><rect x="860.71" y="972.0" width="16.5" height="45.5" fill="rgba(0,100,0,0.12)" stroke="#888888" stroke-width="2.2"/><circle cx="812.75" cy="937.0" r="11.5" fill="#ffcc00"/><path d="M806 943.5H819.5V958.0H806Z" fill="#ffcc00"/><rect x="809.5" y="949.5" width="6.5" height="5.5" fill="#1e1e1e"/><rect x="992" y="923.5" width="5" height="47.5" fill="#aeafad"/><path d="M1262.75 541.5L1268.25 535.50L1273.75 541.50L1279.25 535.50L1284.75 541.50L1290.25 535.50L1295.75 541.50L1301.25 535.50L1306.75 541.50L1312.25 535.50L1317.75 541.50L1323.25 535.50L1328.75 541.50L1334.25 535.50L1339.75 541.50L1345.25 535.50L1350.75 541.50L1356.25 535.50L1361.75 541.50L1367.25 535.50L1372.75 541.50L1378.25 535.50L1383.75 541.50L1389.25 535.50L1394.75 541.50L1400.25 535.50L1405.75 541.50L1411.25 535.50L1416.75 541.50L1422.25 535.50L1427.75 541.50L1433.25 535.50L1437.91 541.50" fill="none" stroke="#75beff" stroke-width="2.2"/><path d="M937 969.5L942.50 963.50L948.00 969.50L953.50 963.50L959.00 969.50L964.50 963.50L970.00 969.50L975.50 963.50L981.00 969.50L986.50 963.50L992.00 969.50" fill="none" stroke="#f48771" stroke-width="2.2"/></svg>
<div style="position:absolute;left:994px;top:971px;width:1075px;height:572px;background:#252526;box-sizing:border-box;border:2.5px solid #454545"></div>
<div style="position:absolute;left:2043px;top:973.5px;width:23.5px;height:567px;background:#29292a;"></div>
<div style="position:absolute;left:996.5px;top:973px;width:1070px;height:47.5px;background:#062f4a;"></div>
<div style="position:absolute;left:2043px;top:973px;width:23.5px;height:47.5px;background:#0d3552;"></div>
<div style="position:absolute;left:1052px;top:975.30px;height:47.5px;line-height:47.5px;font-family:'Liberation Mono', monospace;font-size:32.07px;white-space:pre;color:#d4d4d4">On<span style="color:#18a3ff;font-weight:bold">D</span><span style="color:#18a3ff;font-weight:bold">e</span><span style="color:#18a3ff;font-weight:bold">s</span>troy</div>
<div style="position:absolute;left:1601px;top:975.30px;height:47.5px;line-height:47.5px;font-family:'Liberation Mono', monospace;font-size:32.07px;white-space:pre;color:#a8a8a8">OnDestroy (MonoBehavi…</div>
<div style="position:absolute;left:1052px;top:1022.80px;height:47.5px;line-height:47.5px;font-family:'Liberation Mono', monospace;font-size:32.07px;white-space:pre;color:#d4d4d4">On<span style="color:#18a3ff;font-weight:bold">D</span><span style="color:#18a3ff;font-weight:bold">e</span><span style="color:#18a3ff;font-weight:bold">s</span>troy()</div>
<div style="position:absolute;left:1601px;top:1022.80px;height:47.5px;line-height:47.5px;font-family:'Liberation Mono', monospace;font-size:32.07px;white-space:pre;color:#a8a8a8">This function is call…</div>
<div style="position:absolute;left:1052px;top:1070.30px;height:47.5px;line-height:47.5px;font-family:'Liberation Mono', monospace;font-size:32.07px;white-space:pre;color:#d4d4d4">On<span style="color:#18a3ff;font-weight:bold">D</span>rawGizmos<span style="color:#18a3ff;font-weight:bold">S</span><span style="color:#18a3ff;font-weight:bold">e</span>lected</div>
<div style="position:absolute;left:1601px;top:1070.30px;height:47.5px;line-height:47.5px;font-family:'Liberation Mono', monospace;font-size:32.07px;white-space:pre;color:#a8a8a8">OnDrawGizmosSelected …</div>
<div style="position:absolute;left:1052px;top:1117.80px;height:47.5px;line-height:47.5px;font-family:'Liberation Mono', monospace;font-size:32.07px;white-space:pre;color:#d4d4d4">On<span style="color:#18a3ff;font-weight:bold">D</span>rawGizmos<span style="color:#18a3ff;font-weight:bold">S</span><span style="color:#18a3ff;font-weight:bold">e</span>lected()</div>
<div style="position:absolute;left:1601px;top:1117.80px;height:47.5px;line-height:47.5px;font-family:'Liberation Mono', monospace;font-size:32.07px;white-space:pre;color:#a8a8a8">Callback to draw gizm…</div>
<div style="position:absolute;left:1052px;top:1165.30px;height:47.5px;line-height:47.5px;font-family:'Liberation Mono', monospace;font-size:32.07px;white-space:pre;color:#d4d4d4"><span style="color:#18a3ff;font-weight:bold">D</span>ictionaryBa<span style="color:#18a3ff;font-weight:bold">s</span><span style="color:#18a3ff;font-weight:bold">e</span></div>
<div style="position:absolute;left:1052px;top:1212.80px;height:47.5px;line-height:47.5px;font-family:'Liberation Mono', monospace;font-size:32.07px;white-space:pre;color:#d4d4d4">On<span style="color:#18a3ff;font-weight:bold">D</span>isconnectedFrom<span style="color:#18a3ff;font-weight:bold">S</span><span style="color:#18a3ff;font-weight:bold">e</span>rver</div>
<div style="position:absolute;left:1601px;top:1212.80px;height:47.5px;line-height:47.5px;font-family:'Liberation Mono', monospace;font-size:32.07px;white-space:pre;color:#a8a8a8">OnDisconnectedFromSer…</div>
<div style="position:absolute;left:1052px;top:1260.30px;height:47.5px;line-height:47.5px;font-family:'Liberation Mono', monospace;font-size:32.07px;white-space:pre;color:#d4d4d4">On<span style="color:#18a3ff;font-weight:bold">D</span>isconnectedFrom<span style="color:#18a3ff;font-weight:bold">S</span><span style="color:#18a3ff;font-weight:bold">e</span>rver…</div>
<div style="position:absolute;left:1601px;top:1260.30px;height:47.5px;line-height:47.5px;font-family:'Liberation Mono', monospace;font-size:32.07px;white-space:pre;color:#a8a8a8">Called on the client …</div>
<div style="position:absolute;left:1052px;top:1307.80px;height:47.5px;line-height:47.5px;font-family:'Liberation Mono', monospace;font-size:32.07px;white-space:pre;color:#d4d4d4">On<span style="color:#18a3ff;font-weight:bold">D</span>i<span style="color:#18a3ff;font-weight:bold">s</span>abl<span style="color:#18a3ff;font-weight:bold">e</span></div>
<div style="position:absolute;left:1601px;top:1307.80px;height:47.5px;line-height:47.5px;font-family:'Liberation Mono', monospace;font-size:32.07px;white-space:pre;color:#a8a8a8">OnDisable (MonoBehavi…</div>
<div style="position:absolute;left:1052px;top:1355.30px;height:47.5px;line-height:47.5px;font-family:'Liberation Mono', monospace;font-size:32.07px;white-space:pre;color:#d4d4d4">On<span style="color:#18a3ff;font-weight:bold">D</span>i<span style="color:#18a3ff;font-weight:bold">s</span>abl<span style="color:#18a3ff;font-weight:bold">e</span>()</div>
<div style="position:absolute;left:1601px;top:1355.30px;height:47.5px;line-height:47.5px;font-family:'Liberation Mono', monospace;font-size:32.07px;white-space:pre;color:#a8a8a8">This function is call…</div>
<div style="position:absolute;left:1052px;top:1402.80px;height:47.5px;line-height:47.5px;font-family:'Liberation Mono', monospace;font-size:32.07px;white-space:pre;color:#d4d4d4">OnPlayer<span style="color:#18a3ff;font-weight:bold">D</span>i<span style="color:#18a3ff;font-weight:bold">s</span>conn<span style="color:#18a3ff;font-weight:bold">e</span>cted</div>
<div style="position:absolute;left:1601px;top:1402.80px;height:47.5px;line-height:47.5px;font-family:'Liberation Mono', monospace;font-size:32.07px;white-space:pre;color:#a8a8a8">OnPlayerDisconnected …</div>
<div style="position:absolute;left:1052px;top:1450.30px;height:47.5px;line-height:47.5px;font-family:'Liberation Mono', monospace;font-size:32.07px;white-space:pre;color:#d4d4d4">OnPlayer<span style="color:#18a3ff;font-weight:bold">D</span>i<span style="color:#18a3ff;font-weight:bold">s</span>conn<span style="color:#18a3ff;font-weight:bold">e</span>cted(Net…</div>
<div style="position:absolute;left:1601px;top:1450.30px;height:47.5px;line-height:47.5px;font-family:'Liberation Mono', monospace;font-size:32.07px;white-space:pre;color:#a8a8a8">Called on the server …</div>
<div style="position:absolute;left:1052px;top:1497.80px;height:47.5px;line-height:47.5px;font-family:'Liberation Mono', monospace;font-size:32.07px;white-space:pre;color:#d4d4d4">ef-<span style="color:#18a3ff;font-weight:bold">d</span>bcont<span style="color:#18a3ff;font-weight:bold">e</span>xt-option<span style="color:#18a3ff;font-weight:bold">s</span>-bui…</div>
<div style="position:absolute;left:1601px;top:1497.80px;height:47.5px;line-height:47.5px;font-family:'Liberation Mono', monospace;font-size:32.07px;white-space:pre;color:#a8a8a8">new DbContextOptionsB…</div>
<svg style="position:absolute;left:0;top:0" width="2100" height="1600" viewBox="0 0 2100 1600"><path d="M1007.5 1012.5V981.0H1038.5V1012.5" fill="none" stroke="#c5c5c5" stroke-width="2.6"/><path d="M1007 1012.5H1039" stroke="#c5c5c5" stroke-width="2.4" stroke-dasharray="2.6 2"/><path d="M1007.5 1060.0V1028.5H1038.5V1060.0" fill="none" stroke="#c5c5c5" stroke-width="2.6"/><path d="M1007 1060.0H1039" stroke="#c5c5c5" stroke-width="2.4" stroke-dasharray="2.6 2"/><path d="M1007.5 1107.5V1076.0H1038.5V1107.5" fill="none" stroke="#c5c5c5" stroke-width="2.6"/><path d="M1007 1107.5H1039" stroke="#c5c5c5" stroke-width="2.4" stroke-dasharray="2.6 2"/><path d="M1007.5 1155.0V1123.5H1038.5V1155.0" fill="none" stroke="#c5c5c5" stroke-width="2.6"/><path d="M1007 1155.0H1039" stroke="#c5c5c5" stroke-width="2.4" stroke-dasharray="2.6 2"/><g transform="translate(1001,1166.5) scale(2.5)"><path fill="#ee9d28" d="M11.34 9.71h.71l2.67-2.67v-.71L13.38 5h-.7l-1.82 1.81h-5V5.56l1.86-1.85V3l-2-2H5L1 5v.71l2 2h.71l1.14-1.15v5.79l.5.5H10v.52l1.33 1.34h.71l2.67-2.67v-.71L13.37 10h-.7l-1.86 1.85h-5v-4H10v.48l1.34 1.38zm1.69-3.65l.63.63-2 2-.63-.63 2-2zm0 5l.63.63-2 2-.63-.63 2-2zM3.35 6.65l-1.29-1.3 3.29-3.29 1.3 1.29-3.3 3.3z"/></g><path d="M1007.5 1250.0V1218.5H1038.5V1250.0" fill="none" stroke="#c5c5c5" stroke-width="2.6"/><path d="M1007 1250.0H1039" stroke="#c5c5c5" stroke-width="2.4" stroke-dasharray="2.6 2"/><path d="M1007.5 1297.5V1266.0H1038.5V1297.5" fill="none" stroke="#c5c5c5" stroke-width="2.6"/><path d="M1007 1297.5H1039" stroke="#c5c5c5" stroke-width="2.4" stroke-dasharray="2.6 2"/><path d="M1007.5 1345.0V1313.5H1038.5V1345.0" fill="none" stroke="#c5c5c5" stroke-width="2.6"/><path d="M1007 1345.0H1039" stroke="#c5c5c5" stroke-width="2.4" stroke-dasharray="2.6 2"/><path d="M1007.5 1392.5V1361.0H1038.5V1392.5" fill="none" stroke="#c5c5c5" stroke-width="2.6"/><path d="M1007 1392.5H1039" stroke="#c5c5c5" stroke-width="2.4" stroke-dasharray="2.6 2"/><path d="M1007.5 1440.0V1408.5H1038.5V1440.0" fill="none" stroke="#c5c5c5" stroke-width="2.6"/><path d="M1007 1440.0H1039" stroke="#c5c5c5" stroke-width="2.4" stroke-dasharray="2.6 2"/><path d="M1007.5 1487.5V1456.0H1038.5V1487.5" fill="none" stroke="#c5c5c5" stroke-width="2.6"/><path d="M1007 1487.5H1039" stroke="#c5c5c5" stroke-width="2.4" stroke-dasharray="2.6 2"/><path d="M1007.5 1535.0V1503.5H1038.5V1535.0" fill="none" stroke="#c5c5c5" stroke-width="2.6"/><path d="M1007 1535.0H1039" stroke="#c5c5c5" stroke-width="2.4" stroke-dasharray="2.6 2"/></svg>
<svg style="position:absolute;left:0;top:0" width="3837" height="2002" viewBox="0 0 3837 2002"><rect x="3575.2" y="211.5" width="1.6" height="3" fill="#c586c0" opacity="0.7"/><rect x="3577.2" y="211.5" width="1.6" height="3" fill="#c586c0" opacity="0.7"/><rect x="3579.2" y="211.5" width="1.6" height="3" fill="#c586c0" opacity="0.7"/><rect x="3581.2" y="211.5" width="1.6" height="3" fill="#c586c0" opacity="0.7"/><rect x="3583.2" y="211.5" width="1.6" height="3" fill="#c586c0" opacity="0.7"/><rect x="3587.2" y="211.5" width="1.6" height="3" fill="#4ec9b0" opacity="0.7"/><rect x="3589.2" y="211.5" width="1.6" height="3" fill="#4ec9b0" opacity="0.7"/><rect x="3591.2" y="211.5" width="1.6" height="3" fill="#4ec9b0" opacity="0.7"/><rect x="3593.2" y="211.5" width="1.6" height="3" fill="#4ec9b0" opacity="0.7"/><rect x="3595.2" y="211.5" width="1.6" height="3" fill="#4ec9b0" opacity="0.7"/><rect x="3597.2" y="211.5" width="1.6" height="3" fill="#4ec9b0" opacity="0.7"/><rect x="3599.2" y="212.5" width="1.6" height="2" fill="#d4d4d4" opacity="0.35"/><rect x="3601.2" y="211.5" width="1.6" height="3" fill="#4ec9b0" opacity="0.7"/><rect x="3603.2" y="211.5" width="1.6" height="3" fill="#4ec9b0" opacity="0.7"/><rect x="3605.2" y="211.5" width="1.6" height="3" fill="#4ec9b0" opacity="0.7"/><rect x="3607.2" y="211.5" width="1.6" height="3" fill="#4ec9b0" opacity="0.7"/><rect x="3609.2" y="211.5" width="1.6" height="3" fill="#4ec9b0" opacity="0.7"/><rect x="3611.2" y="211.5" width="1.6" height="3" fill="#4ec9b0" opacity="0.7"/><rect x="3613.2" y="211.5" width="1.6" height="3" fill="#4ec9b0" opacity="0.7"/><rect x="3615.2" y="211.5" width="1.6" height="3" fill="#4ec9b0" opacity="0.7"/><rect x="3617.2" y="211.5" width="1.6" height="3" fill="#4ec9b0" opacity="0.7"/><rect x="3619.2" y="211.5" width="1.6" height="3" fill="#4ec9b0" opacity="0.7"/><rect x="3621.2" y="211.5" width="1.6" height="3" fill="#4ec9b0" opacity="0.7"/><rect x="3623.2" y="212.5" width="1.6" height="2" fill="#d4d4d4" opacity="0.35"/><rect x="3575.2" y="215.5" width="1.6" height="3" fill="#c586c0" opacity="0.7"/><rect x="3577.2" y="215.5" width="1.6" height="3" fill="#c586c0" opacity="0.7"/><rect x="3579.2" y="215.5" width="1.6" height="3" fill="#c586c0" opacity="0.7"/><rect x="3581.2" y="215.5" width="1.6" height="3" fill="#c586c0" opacity="0.7"/><rect x="3583.2" y="215.5" width="1.6" height="3" fill="#c586c0" opacity="0.7"/><rect x="3587.2" y="215.5" width="1.6" height="3" fill="#4ec9b0" opacity="0.7"/><rect x="3589.2" y="215.5" width="1.6" height="3" fill="#4ec9b0" opacity="0.7"/><rect x="3591.2" y="215.5" width="1.6" height="3" fill="#4ec9b0" opacity="0.7"/><rect x="3593.2" y="215.5" width="1.6" height="3" fill="#4ec9b0" opacity="0.7"/><rect x="3595.2" y="215.5" width="1.6" height="3" fill="#4ec9b0" opacity="0.7"/><rect x="3597.2" y="215.5" width="1.6" height="3" fill="#4ec9b0" opacity="0.7"/><rect x="3599.2" y="216.5" width="1.6" height="2" fill="#d4d4d4" opacity="0.35"/><rect x="3601.2" y="215.5" width="1.6" height="3" fill="#4ec9b0" opacity="0.7"/><rect x="3603.2" y="215.5" width="1.6" height="3" fill="#4ec9b0" opacity="0.7"/><rect x="3605.2" y="215.5" width="1.6" height="3" fill="#4ec9b0" opacity="0.7"/><rect x="3607.2" y="215.5" width="1.6" height="3" fill="#4ec9b0" opacity="0.7"/><rect x="3609.2" y="215.5" width="1.6" height="3" fill="#4ec9b0" opacity="0.7"/><rect x="3611.2" y="215.5" width="1.6" height="3" fill="#4ec9b0" opacity="0.7"/><rect x="3613.2" y="215.5" width="1.6" height="3" fill="#4ec9b0" opacity="0.7"/><rect x="3615.2" y="215.5" width="1.6" height="3" fill="#4ec9b0" opacity="0.7"/><rect x="3617.2" y="215.5" width="1.6" height="3" fill="#4ec9b0" opacity="0.7"/><rect x="3619.2" y="215.5" width="1.6" height="3" fill="#4ec9b0" opacity="0.7"/><rect x="3621.2" y="215.5" width="1.6" height="3" fill="#4ec9b0" opacity="0.7"/><rect x="3623.2" y="216.5" width="1.6" height="2" fill="#d4d4d4" opacity="0.35"/><rect x="3625.2" y="215.5" width="1.6" height="3" fill="#4ec9b0" opacity="0.7"/><rect x="3627.2" y="215.5" width="1.6" height="3" fill="#4ec9b0" opacity="0.7"/><rect x="3629.2" y="215.5" width="1.6" height="3" fill="#4ec9b0" opacity="0.7"/><rect x="3631.2" y="215.5" width="1.6" height="3" fill="#4ec9b0" opacity="0.7"/><rect x="3633.2" y="215.5" width="1.6" height="3" fill="#4ec9b0" opacity="0.7"/><rect x="3635.2" y="215.5" width="1.6" height="3" fill="#4ec9b0" opacity="0.7"/><rect x="3637.2" y="215.5" width="1.6" height="3" fill="#4ec9b0" opacity="0.7"/><rect x="3639.2" y="216.5" width="1.6" height="2" fill="#d4d4d4" opacity="0.35"/><rect x="3575.2" y="219.5" width="1.6" height="3" fill="#c586c0" opacity="0.7"/><rect x="3577.2" y="219.5" width="1.6" height="3" fill="#c586c0" opacity="0.7"/><rect x="3579.2" y="219.5" width="1.6" height="3" fill="#c586c0" opacity="0.7"/><rect x="3581.2" y="219.5" width="1.6" height="3" fill="#c586c0" opacity="0.7"/><rect x="3583.2" y="219.5" width="1.6" height="3" fill="#c586c0" opacity="0.7"/><rect x="3587.2" y="219.5" width="1.6" height="3" fill="#4ec9b0" opacity="0.7"/><rect x="3589.2" y="219.5" width="1.6" height="3" fill="#4ec9b0" opacity="0.7"/><rect x="3591.2" y="219.5" width="1.6" height="3" fill="#4ec9b0" opacity="0.7"/><rect x="3593.2" y="219.5" width="1.6" height="3" fill="#4ec9b0" opacity="0.7"/><rect x="3595.2" y="219.5" width="1.6" height="3" fill="#4ec9b0" opacity="0.7"/><rect x="3597.2" y="219.5" width="1.6" height="3" fill="#4ec9b0" opacity="0.7"/><rect x="3599.2" y="219.5" width="1.6" height="3" fill="#4ec9b0" opacity="0.7"/><rect x="3601.2" y="219.5" width="1.6" height="3" fill="#4ec9b0" opacity="0.7"/><rect x="3603.2" y="219.5" width="1.6" height="3" fill="#4ec9b0" opacity="0.7"/><rect x="3605.2" y="219.5" width="1.6" height="3" fill="#4ec9b0" opacity="0.7"/><rect x="3607.2" y="219.5" width="1.6" height="3" fill="#4ec9b0" opacity="0.7"/><rect x="3609.2" y="220.5" width="1.6" height="2" fill="#d4d4d4" opacity="0.35"/><rect x="3575.2" y="223.5" width="1.6" height="3" fill="#c586c0" opacity="0.7"/><rect x="3577.2" y="223.5" width="1.6" height="3" fill="#c586c0" opacity="0.7"/><rect x="3579.2" y="223.5" width="1.6" height="3" fill="#c586c0" opacity="0.7"/><rect x="3581.2" y="223.5" width="1.6" height="3" fill="#c586c0" opacity="0.7"/><rect x="3583.2" y="223.5" width="1.6" height="3" fill="#c586c0" opacity="0.7"/><rect x="3587.2" y="223.5" width="1.6" height="3" fill="#4ec9b0" opacity="0.7"/><rect x="3589.2" y="223.5" width="1.6" height="3" fill="#4ec9b0" opacity="0.7"/><rect x="3591.2" y="223.5" width="1.6" height="3" fill="#4ec9b0" opacity="0.7"/><rect x="3593.2" y="223.5" width="1.6" height="3" fill="#4ec9b0" opacity="0.7"/><rect x="3595.2" y="223.5" width="1.6" height="3" fill="#4ec9b0" opacity="0.7"/><rect x="3597.2" y="223.5" width="1.6" height="3" fill="#4ec9b0" opacity="0.7"/><rect x="3599.2" y="223.5" width="1.6" height="3" fill="#4ec9b0" opacity="0.7"/><rect x="3601.2" y="223.5" width="1.6" height="3" fill="#4ec9b0" opacity="0.7"/><rect x="3603.2" y="223.5" width="1.6" height="3" fill="#4ec9b0" opacity="0.7"/><rect x="3605.2" y="223.5" width="1.6" height="3" fill="#4ec9b0" opacity="0.7"/><rect x="3607.2" y="223.5" width="1.6" height="3" fill="#4ec9b0" opacity="0.7"/><rect x="3609.2" y="224.5" width="1.6" height="2" fill="#d4d4d4" opacity="0.35"/><rect x="3611.2" y="223.5" width="1.6" height="3" fill="#4ec9b0" opacity="0.7"/><rect x="3613.2" y="223.5" width="1.6" height="3" fill="#4ec9b0" opacity="0.7"/><rect x="3615.2" y="224.5" width="1.6" height="2" fill="#d4d4d4" opacity="0.35"/><rect x="3575.2" y="231.5" width="1.6" height="3" fill="#569cd6" opacity="0.7"/><rect x="3577.2" y="231.5" width="1.6" height="3" fill="#569cd6" opacity="0.7"/><rect x="3579.2" y="231.5" width="1.6" height="3" fill="#569cd6" opacity="0.7"/><rect x="3581.2" y="231.5" width="1.6" height="3" fill="#569cd6" opacity="0.7"/><rect x="3583.2" y="231.5" width="1.6" height="3" fill="#569cd6" opacity="0.7"/><rect x="3585.2" y="231.5" width="1.6" height="3" fill="#569cd6" opacity="0.7"/><rect x="3589.2" y="231.5" width="1.6" height="3" fill="#569cd6" opacity="0.7"/><rect x="3591.2" y="231.5" width="1.6" height="3" fill="#569cd6" opacity="0.7"/><rect x="3593.2" y="231.5" width="1.6" height="3" fill="#569cd6" opacity="0.7"/><rect x="3595.2" y="231.5" width="1.6" height="3" fill="#569cd6" opacity="0.7"/><rect x="3597.2" y="231.5" width="1.6" height="3" fill="#569cd6" opacity="0.7"/><rect x="3601.2" y="231.5" width="1.6" height="3" fill="#4ec9b0" opacity="0.7"/><rect x="3603.2" y="231.5" width="1.6" height="3" fill="#4ec9b0" opacity="0.7"/><rect x="3605.2" y="231.5" width="1.6" height="3" fill="#4ec9b0" opacity="0.7"/><rect x="3607.2" y="231.5" width="1.6" height="3" fill="#4ec9b0" opacity="0.7"/><rect x="3609.2" y="231.5" width="1.6" height="3" fill="#4ec9b0" opacity="0.7"/><rect x="3613.2" y="232.5" width="1.6" height="2" fill="#d4d4d4" opacity="0.35"/><rect x="3617.2" y="231.5" width="1.6" height="3" fill="#4ec9b0" opacity="0.7"/><rect x="3619.2" y="231.5" width="1.6" height="3" fill="#4ec9b0" opacity="0.7"/><rect x="3621.2" y="231.5" width="1.6" height="3" fill="#4ec9b0" opacity="0.7"/><rect x="3623.2" y="231.5" width="1.6" height="3" fill="#4ec9b0" opacity="0.7"/><rect x="3625.2" y="231.5" width="1.6" height="3" fill="#4ec9b0" opacity="0.7"/><rect x="3627.2" y="231.5" width="1.6" height="3" fill="#4ec9b0" opacity="0.7"/><rect x="3629.2" y="231.5" width="1.6" height="3" fill="#4ec9b0" opacity="0.7"/><rect x="3631.2" y="231.5" width="1.6" height="3" fill="#4ec9b0" opacity="0.7"/><rect x="3633.2" y="231.5" width="1.6" height="3" fill="#4ec9b0" opacity="0.7"/><rect x="3635.2" y="231.5" width="1.6" height="3" fill="#4ec9b0" opacity="0.7"/><rect x="3637.2" y="231.5" width="1.6" height="3" fill="#4ec9b0" opacity="0.7"/><rect x="3639.2" y="231.5" width="1.6" height="3" fill="#4ec9b0" opacity="0.7"/><rect x="3641.2" y="231.5" width="1.6" height="3" fill="#4ec9b0" opacity="0.7"/><rect x="3575.2" y="235.5" width="1.6" height="3" fill="#d4d4d4" opacity="0.35"/><rect x="3583.2" y="239.5" width="1.6" height="3" fill="#d4d4d4" opacity="0.35"/><rect x="3585.2" y="239.5" width="1.6" height="3" fill="#4ec9b0" opacity="0.7"/><rect x="3587.2" y="239.5" width="1.6" height="3" fill="#4ec9b0" opacity="0.7"/><rect x="3589.2" y="239.5" width="1.6" height="3" fill="#4ec9b0" opacity="0.7"/><rect x="3591.2" y="239.5" width="1.6" height="3" fill="#4ec9b0" opacity="0.7"/><rect x="3593.2" y="239.5" width="1.6" height="3" fill="#4ec9b0" opacity="0.7"/><rect x="3595.2" y="239.5" width="1.6" height="3" fill="#4ec9b0" opacity="0.7"/><rect x="3597.2" y="239.5" width="1.6" height="3" fill="#4ec9b0" opacity="0.7"/><rect x="3599.2" y="239.5" width="1.6" height="3" fill="#4ec9b0" opacity="0.7"/><rect x="3601.2" y="239.5" width="1.6" height="3" fill="#4ec9b0" opacity="0.7"/><rect x="3603.2" y="239.5" width="1.6" height="3" fill="#4ec9b0" opacity="0.7"/><rect x="3605.2" y="239.5" width="1.6" height="3" fill="#4ec9b0" opacity="0.7"/><rect x="3607.2" y="239.5" width="1.6" height="3" fill="#4ec9b0" opacity="0.7"/><rect x="3609.2" y="239.5" width="1.6" height="3" fill="#4ec9b0" opacity="0.7"/><rect x="3611.2" y="239.5" width="1.6" height="3" fill="#4ec9b0" opacity="0.7"/><rect x="3613.2" y="239.5" width="1.6" height="3" fill="#d4d4d4" opacity="0.35"/><rect x="3617.2" y="239.5" width="1.6" height="3" fill="#4ec9b0" opacity="0.7"/><rect x="3619.2" y="239.5" width="1.6" height="3" fill="#4ec9b0" opacity="0.7"/><rect x="3621.2" y="239.5" width="1.6" height="3" fill="#4ec9b0" opacity="0.7"/><rect x="3623.2" y="239.5" width="1.6" height="3" fill="#4ec9b0" opacity="0.7"/><rect x="3625.2" y="239.5" width="1.6" height="3" fill="#4ec9b0" opacity="0.7"/><rect x="3627.2" y="239.5" width="1.6" height="3" fill="#4ec9b0" opacity="0.7"/><rect x="3629.2" y="239.5" width="1.6" height="3" fill="#4ec9b0" opacity="0.7"/><rect x="3631.2" y="239.5" width="1.6" height="3" fill="#4ec9b0" opacity="0.7"/><rect x="3633.2" y="239.5" width="1.6" height="3" fill="#4ec9b0" opacity="0.7"/><rect x="3637.2" y="239.5" width="1.6" height="3" fill="#9cdcfe" opacity="0.7"/><rect x="3639.2" y="239.5" width="1.6" height="3" fill="#9cdcfe" opacity="0.7"/><rect x="3641.2" y="239.5" width="1.6" height="3" fill="#9cdcfe" opacity="0.7"/><rect x="3643.2" y="239.5" width="1.6" height="3" fill="#9cdcfe" opacity="0.7"/><rect x="3645.2" y="239.5" width="1.6" height="3" fill="#9cdcfe" opacity="0.7"/><rect x="3647.2" y="239.5" width="1.6" height="3" fill="#9cdcfe" opacity="0.7"/><rect x="3649.2" y="240.5" width="1.6" height="2" fill="#d4d4d4" opacity="0.35"/><rect x="3583.2" y="247.5" width="1.6" height="3" fill="#569cd6" opacity="0.7"/><rect x="3585.2" y="247.5" width="1.6" height="3" fill="#569cd6" opacity="0.7"/><rect x="3587.2" y="247.5" width="1.6" height="3" fill="#569cd6" opacity="0.7"/><rect x="3589.2" y="247.5" width="1.6" height="3" fill="#569cd6" opacity="0.7"/><rect x="3593.2" y="247.5" width="1.6" height="3" fill="#dcdcaa" opacity="0.7"/><rect x="3595.2" y="247.5" width="1.6" height="3" fill="#dcdcaa" opacity="0.7"/><rect x="3597.2" y="247.5" width="1.6" height="3" fill="#dcdcaa" opacity="0.7"/><rect x="3599.2" y="247.5" width="1.6" height="3" fill="#dcdcaa" opacity="0.7"/><rect x="3601.2" y="247.5" width="1.6" height="3" fill="#dcdcaa" opacity="0.7"/><rect x="3603.2" y="247.5" width="1.6" height="3" fill="#dcdcaa" opacity="0.7"/><rect x="3605.2" y="247.5" width="1.6" height="3" fill="#d4d4d4" opacity="0.35"/><rect x="3607.2" y="247.5" width="1.6" height="3" fill="#d4d4d4" opacity="0.35"/><rect x="3583.2" y="251.5" width="1.6" height="3" fill="#d4d4d4" opacity="0.35"/><rect x="3591.2" y="255.5" width="1.6" height="3" fill="#dcdcaa" opacity="0.7"/><rect x="3593.2" y="255.5" width="1.6" height="3" fill="#dcdcaa" opacity="0.7"/><rect x="3595.2" y="255.5" width="1.6" height="3" fill="#dcdcaa" opacity="0.7"/><rect x="3597.2" y="255.5" width="1.6" height="3" fill="#dcdcaa" opacity="0.7"/><rect x="3599.2" y="255.5" width="1.6" height="3" fill="#dcdcaa" opacity="0.7"/><rect x="3601.2" y="255.5" width="1.6" height="3" fill="#dcdcaa" opacity="0.7"/><rect x="3603.2" y="255.5" width="1.6" height="3" fill="#dcdcaa" opacity="0.7"/><rect x="3605.2" y="255.5" width="1.6" height="3" fill="#dcdcaa" opacity="0.7"/><rect x="3607.2" y="255.5" width="1.6" height="3" fill="#dcdcaa" opacity="0.7"/><rect x="3609.2" y="255.5" width="1.6" height="3" fill="#dcdcaa" opacity="0.7"/><rect x="3611.2" y="255.5" width="1.6" height="3" fill="#dcdcaa" opacity="0.7"/><rect x="3613.2" y="255.5" width="1.6" height="3" fill="#dcdcaa" opacity="0.7"/><rect x="3615.2" y="255.5" width="1.6" height="3" fill="#d4d4d4" opacity="0.35"/><rect x="3617.2" y="255.5" width="1.6" height="3" fill="#4ec9b0" opacity="0.7"/><rect x="3619.2" y="255.5" width="1.6" height="3" fill="#4ec9b0" opacity="0.7"/><rect x="3621.2" y="255.5" width="1.6" height="3" fill="#4ec9b0" opacity="0.7"/><rect x="3623.2" y="255.5" width="1.6" height="3" fill="#4ec9b0" opacity="0.7"/><rect x="3625.2" y="255.5" width="1.6" height="3" fill="#4ec9b0" opacity="0.7"/><rect x="3627.2" y="255.5" width="1.6" height="3" fill="#4ec9b0" opacity="0.7"/><rect x="3629.2" y="255.5" width="1.6" height="3" fill="#4ec9b0" opacity="0.7"/><rect x="3631.2" y="255.5" width="1.6" height="3" fill="#4ec9b0" opacity="0.7"/><rect x="3633.2" y="255.5" width="1.6" height="3" fill="#4ec9b0" opacity="0.7"/><rect x="3635.2" y="255.5" width="1.6" height="3" fill="#4ec9b0" opacity="0.7"/><rect x="3637.2" y="255.5" width="1.6" height="3" fill="#4ec9b0" opacity="0.7"/><rect x="3639.2" y="255.5" width="1.6" height="3" fill="#4ec9b0" opacity="0.7"/><rect x="3641.2" y="255.5" width="1.6" height="3" fill="#d4d4d4" opacity="0.35"/><rect x="3643.2" y="255.5" width="1.6" height="3" fill="#d4d4d4" opacity="0.35"/><rect x="3645.2" y="255.5" width="1.6" height="3" fill="#d4d4d4" opacity="0.35"/><rect x="3647.2" y="256.5" width="1.6" height="2" fill="#d4d4d4" opacity="0.35"/><rect x="3649.2" y="255.5" width="1.6" height="3" fill="#9cdcfe" opacity="0.7"/><rect x="3651.2" y="255.5" width="1.6" height="3" fill="#9cdcfe" opacity="0.7"/><rect x="3653.2" y="255.5" width="1.6" height="3" fill="#9cdcfe" opacity="0.7"/><rect x="3655.2" y="255.5" width="1.6" height="3" fill="#9cdcfe" opacity="0.7"/><rect x="3657.2" y="255.5" width="1.6" height="3" fill="#9cdcfe" opacity="0.7"/><rect x="3659.2" y="255.5" width="1.6" height="3" fill="#9cdcfe" opacity="0.7"/><rect x="3661.2" y="255.5" width="1.6" height="3" fill="#9cdcfe" opacity="0.7"/><rect x="3663.2" y="255.5" width="1.6" height="3" fill="#9cdcfe" opacity="0.7"/><rect x="3665.2" y="255.5" width="1.6" height="3" fill="#9cdcfe" opacity="0.7"/><rect x="3667.2" y="255.5" width="1.6" height="3" fill="#9cdcfe" opacity="0.7"/><rect x="3669.2" y="255.5" width="1.6" height="3" fill="#9cdcfe" opacity="0.7"/><rect x="3673.2" y="255.5" width="1.6" height="3" fill="#d4d4d4" opacity="0.35"/><rect x="3677.2" y="255.5" width="1.6" height="3" fill="#9cdcfe" opacity="0.7"/><rect x="3679.2" y="255.5" width="1.6" height="3" fill="#9cdcfe" opacity="0.7"/><rect x="3681.2" y="255.5" width="1.6" height="3" fill="#9cdcfe" opacity="0.7"/><rect x="3683.2" y="255.5" width="1.6" height="3" fill="#9cdcfe" opacity="0.7"/><rect x="3685.2" y="255.5" width="1.6" height="3" fill="#9cdcfe" opacity="0.7"/><rect x="3687.2" y="255.5" width="1.6" height="3" fill="#9cdcfe" opacity="0.7"/><rect x="3689.2" y="256.5" width="1.6" height="2" fill="#d4d4d4" opacity="0.35"/><rect x="3691.2" y="255.5" width="1.6" height="3" fill="#9cdcfe" opacity="0.7"/><rect x="3693.2" y="255.5" width="1.6" height="3" fill="#9cdcfe" opacity="0.7"/><rect x="3695.2" y="255.5" width="1.6" height="3" fill="#9cdcfe" opacity="0.7"/><rect x="3697.2" y="255.5" width="1.6" height="3" fill="#9cdcfe" opacity="0.7"/><rect x="3699.2" y="255.5" width="1.6" height="3" fill="#9cdcfe" opacity="0.7"/><rect x="3701.2" y="255.5" width="1.6" height="3" fill="#9cdcfe" opacity="0.7"/><rect x="3703.2" y="255.5" width="1.6" height="3" fill="#9cdcfe" opacity="0.7"/><rect x="3705.2" y="255.5" width="1.6" height="3" fill="#9cdcfe" opacity="0.7"/><rect x="3707.2" y="256.5" width="1.6" height="2" fill="#d4d4d4" opacity="0.35"/><rect x="3575" y="259" width="232" height="4" fill="#1f3b58"/><rect x="3591" y="259" width="6" height="4" fill="#c8372b"/><rect x="3583.2" y="263.5" width="1.6" height="3" fill="#d4d4d4" opacity="0.35"/><rect x="3575.2" y="267.5" width="1.6" height="3" fill="#d4d4d4" opacity="0.35"/><rect x="3597" y="259" width="2" height="4" fill="#3c8ad0"/></svg>
<div style="position:absolute;left:3806.5px;top:211px;width:1.5px;height:1791px;background:#3b3b3b;"></div>
<div style="position:absolute;left:3808px;top:210.5px;width:29px;height:1191px;background:#424242;"></div>
<div style="position:absolute;left:3806.5px;top:210.5px;width:1.5px;height:1191px;background:#545454;"></div>
<div style="position:absolute;left:3830px;top:400px;width:7px;height:32px;background:#6fa3cf;"></div>
<div style="position:absolute;left:3808px;top:682px;width:29px;height:5px;background:#8c8c8c;"></div>
<div style="position:absolute;left:3830px;top:684px;width:7px;height:32px;background:#a73a36;"></div>
<div style="position:absolute;left:147px;top:2016.03px;height:29.5px;line-height:29.5px;font-size:29.5px;font-family:'Liberation Sans', sans-serif;color:#ffffff;font-weight:normal;letter-spacing:-0.2px;white-space:pre;">0 tests</div>
<div style="position:absolute;left:382px;top:2016.03px;height:29.5px;line-height:29.5px;font-size:29.5px;font-family:'Liberation Sans', sans-serif;color:#ffffff;font-weight:normal;letter-spacing:0px;white-space:pre;">0</div>
<div style="position:absolute;left:624px;top:2016.03px;height:29.5px;line-height:29.5px;font-size:29.5px;font-family:'Liberation Sans', sans-serif;color:#ffffff;font-weight:normal;letter-spacing:-0.3px;white-space:pre;">csharp</div>
<div style="position:absolute;left:722.5px;top:2018px;width:3px;height:29px;background:#ffffff;"></div>
<div style="position:absolute;left:779px;top:2016.03px;height:29.5px;line-height:29.5px;font-size:29.5px;font-family:'Liberation Sans', sans-serif;color:#ffffff;font-weight:normal;letter-spacing:-0.3px;white-space:pre;">Mover.cs</div>
<div style="position:absolute;left:2879px;top:2016.03px;height:29.5px;line-height:29.5px;font-size:29.5px;font-family:'Liberation Sans', sans-serif;color:#ffffff;font-weight:normal;letter-spacing:-0.3px;white-space:pre;">Ln 13, Col 12</div>
<div style="position:absolute;left:3090px;top:2016.03px;height:29.5px;line-height:29.5px;font-size:29.5px;font-family:'Liberation Sans', sans-serif;color:#ffffff;font-weight:normal;letter-spacing:-0.95px;white-space:pre;">Spaces: 4</div>
<div style="position:absolute;left:3252px;top:2016.03px;height:29.5px;line-height:29.5px;font-size:29.5px;font-family:'Liberation Sans', sans-serif;color:#ffffff;font-weight:normal;letter-spacing:0px;white-space:pre;">UTF-8 with BOM</div>
<div style="position:absolute;left:3511px;top:2016.03px;height:29.5px;line-height:29.5px;font-size:29.5px;font-family:'Liberation Sans', sans-serif;color:#ffffff;font-weight:normal;letter-spacing:-3.3px;white-space:pre;">CRLF</div>
<div style="position:absolute;left:3615px;top:2016.03px;height:29.5px;line-height:29.5px;font-size:29.5px;font-family:'Liberation Sans', sans-serif;color:#ffffff;font-weight:normal;letter-spacing:-0.6px;white-space:pre;">C#</div>
<svg style="position:absolute;left:0;top:0" width="3837" height="2060" viewBox="0 0 3837 2060"><path d="M31 2017L42 2028L31 2039M52 2015L43 2022L52 2029" fill="none" stroke="#ffffff" stroke-width="2.6"/><path d="M114 2016H129M117.5 2016V2027L109 2042.5H134L125.5 2027V2016M112 2036H131" fill="none" stroke="#ffffff" stroke-width="2.6" stroke-linejoin="round"/><circle cx="290.25" cy="2029.5" r="13.8" fill="none" stroke="#ffffff" stroke-width="2.6"/><path d="M284 2023.3L296.5 2035.8M296.5 2023.3L284 2035.8" stroke="#ffffff" stroke-width="2.6"/><path d="M325.8 2020V2041M319 2025.8L325.8 2021.2" fill="none" stroke="#ffffff" stroke-width="3.0"/><path d="M358.5 2016L373 2043H344Z" fill="none" stroke="#ffffff" stroke-width="2.6" stroke-linejoin="round"/><path d="M358.5 2025V2034M358.5 2036.5V2039.5" stroke="#ffffff" stroke-width="3"/><circle cx="425.25" cy="2029.5" r="13.8" fill="none" stroke="#ffffff" stroke-width="2.6"/><path d="M425.25 2027V2037M425.25 2021.5V2024.5" stroke="#ffffff" stroke-width="3.2"/><path d="M461.8 2020V2041M455 2025.8L461.8 2021.2" fill="none" stroke="#ffffff" stroke-width="3.0"/><path d="M521 2044C516 2043 514 2039 514.5 2034C515 2027 522 2022 525 2015C528 2020 528 2024 527.5 2027C529 2026 530.5 2025 531 2023.5C535 2027 537 2032 536.5 2036C536 2041 533 2044 529 2044.5M521 2044C519 2041 520 2038 522 2035C524 2033 526 2031 527 2029C529 2032 531 2036 530.5 2039C530 2042 529.5 2043.5 529 2044.5" fill="none" stroke="#ffffff" stroke-width="2.4" stroke-linejoin="round"/><path d="M587 2030L596 2040L614 2018" fill="none" stroke="#ffffff" stroke-width="2.6"/><path d="M741 2030L750 2040L768 2018" fill="none" stroke="#ffffff" stroke-width="2.6"/><path d="M3704 2022V2014.5H3727V2029.5H3719.5L3716 2034V2029.5" fill="none" stroke="#ffffff" stroke-width="2.4"/><circle cx="3706.5" cy="2028" r="6" fill="none" stroke="#ffffff" stroke-width="2.4"/><path d="M3696 2045C3696 2033 3717 2033 3717 2045" fill="none" stroke="#ffffff" stroke-width="2.4"/><path d="M3786 2015.5C3780 2015.5 3776 2020 3776 2026V2037L3773.5 2041H3798.5L3796 2037V2026C3796 2020 3792 2015.5 3786 2015.5Z" fill="none" stroke="#ffffff" stroke-width="2.4" stroke-linejoin="round"/><path d="M3782 2041.5C3782 2046 3790 2046 3790 2041.5" fill="none" stroke="#ffffff" stroke-width="2.4"/></svg>
</body></html>
